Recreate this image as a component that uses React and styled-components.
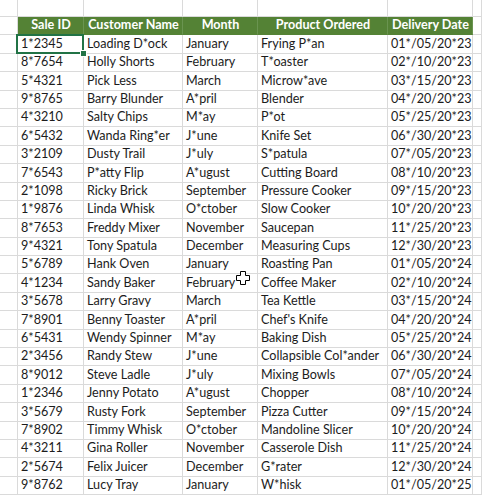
import React from 'react';
import styled, { createGlobalStyle } from 'styled-components';

const GlobalStyle = createGlobalStyle`
  html, body {
    margin: 0;
    padding: 0;
    background: #fff;
    overflow: hidden;
  }
`;

const rows = [
  ['1*2345', 'Loading D*ock', 'January', 'Frying P*an', '01*/05/20*23'],
  ['8*7654', 'Holly Shorts', 'February', 'T*oaster', '02*/10/20*23'],
  ['5*4321', 'Pick Less', 'March', 'Microw*ave', '03*/15/20*23'],
  ['9*8765', 'Barry Blunder', 'A*pril', 'Blender', '04*/20/20*23'],
  ['4*3210', 'Salty Chips', 'M*ay', 'P*ot', '05*/25/20*23'],
  ['6*5432', 'Wanda Ring*er', 'J*une', 'Knife Set', '06*/30/20*23'],
  ['3*2109', 'Dusty Trail', 'J*uly', 'S*patula', '07*/05/20*23'],
  ['7*6543', 'P*atty Flip', 'A*ugust', 'Cutting Board', '08*/10/20*23'],
  ['2*1098', 'Ricky Brick', 'September', 'Pressure Cooker', '09*/15/20*23'],
  ['1*9876', 'Linda Whisk', 'O*ctober', 'Slow Cooker', '10*/20/20*23'],
  ['8*7653', 'Freddy Mixer', 'November', 'Saucepan', '11*/25/20*23'],
  ['9*4321', 'Tony Spatula', 'December', 'Measuring Cups', '12*/30/20*23'],
  ['5*6789', 'Hank Oven', 'January', 'Roasting Pan', '01*/05/20*24'],
  ['4*1234', 'Sandy Baker', 'February', 'Coffee Maker', '02*/10/20*24'],
  ['3*5678', 'Larry Gravy', 'March', 'Tea Kettle', '03*/15/20*24'],
  ['7*8901', 'Benny Toaster', 'A*pril', "Chef's Knife", '04*/20/20*24'],
  ['6*5431', 'Wendy Spinner', 'M*ay', 'Baking Dish', '05*/25/20*24'],
  ['2*3456', 'Randy Stew', 'J*une', 'Collapsible Col*ander', '06*/30/20*24'],
  ['8*9012', 'Steve Ladle', 'J*uly', 'Mixing Bowls', '07*/05/20*24'],
  ['1*2346', 'Jenny Potato', 'A*ugust', 'Chopper', '08*/10/20*24'],
  ['3*5679', 'Rusty Fork', 'September', 'Pizza Cutter', '09*/15/20*24'],
  ['7*8902', 'Timmy Whisk', 'O*ctober', 'Mandoline Slicer', '10*/20/20*24'],
  ['4*3211', 'Gina Roller', 'November', 'Casserole Dish', '11*/25/20*24'],
  ['2*5674', 'Felix Juicer', 'December', 'G*rater', '12*/30/20*24'],
  ['9*8762', 'Lucy Tray', 'January', 'W*hisk', '01*/05/20*25'],
];

const headers = ['Sale ID', 'Customer Name', 'Month', 'Product Ordered', 'Delivery Date'];

const Sheet = styled.div`
  position: relative;
  width: 482px;
  height: 495px;
  overflow: hidden;
  display: grid;
  grid-template-columns: 18px 66px 99px 75px 130px 85px 1fr;
  grid-template-rows: 17px;
  grid-auto-rows: 18.4px;
  font-family: Lato, 'Liberation Sans', Arial, sans-serif;
  font-size: 12.6px;
  color: #1c1c1c;
`;

const Cell = styled.div`
  position: relative;
  box-sizing: border-box;
  border-right: 1px solid #dadada;
  border-bottom: 1px solid #dadada;
  padding: 0 2px 1px 3px;
  white-space: nowrap;
  overflow: hidden;
  display: flex;
  align-items: flex-end;
  line-height: 16px;
`;

const HeadCell = styled(Cell)`
  background: #548235;
  color: #fff;
  font-weight: 700;
  font-size: 12.6px;
  justify-content: center;
  border-right-color: #6a9450;
  border-bottom-color: #548235;
`;

const Selected = styled(Cell)`
  overflow: visible;
  z-index: 2;
  &::after {
    content: '';
    position: absolute;
    left: -2px;
    top: -1px;
    right: -1px;
    bottom: -1px;
    border: 2px solid #217346;
    pointer-events: none;
  }
`;

const Handle = styled.span`
  position: absolute;
  right: -4px;
  bottom: -4px;
  width: 5px;
  height: 5px;
  background: #217346;
  border: 1px solid #fff;
  z-index: 3;
`;

const Cursor = styled.svg`
  position: absolute;
  left: 236px;
  top: 271px;
  z-index: 5;
`;

const FatCross = () => (
  <Cursor width="14" height="14" viewBox="0 0 14 14">
    <path
      d="M4.5 0.5h5v4h4v5h-4v4h-5v-4h-4v-5h4z"
      fill="#fff"
      stroke="#000"
      strokeWidth="1"
    />
  </Cursor>
);

const Blank = () => <Cell />;

export default function App() {
  return (
    <>
      <GlobalStyle />
      <Sheet>
        {Array.from({ length: 7 }).map((_, i) => (
          <Blank key={'t' + i} />
        ))}
        <Blank />
        {headers.map((h) => (
          <HeadCell key={h}>{h}</HeadCell>
        ))}
        <Blank />
        {rows.map((r, ri) => (
          <React.Fragment key={ri}>
            <Blank />
            {r.map((v, ci) =>
              ri === 0 && ci === 0 ? (
                <Selected key={ci}>
                  {v}
                  <Handle />
                </Selected>
              ) : (
                <Cell key={ci}>{v}</Cell>
              )
            )}
            <Blank />
          </React.Fragment>
        ))}
        <FatCross />
      </Sheet>
    </>
  );
}
